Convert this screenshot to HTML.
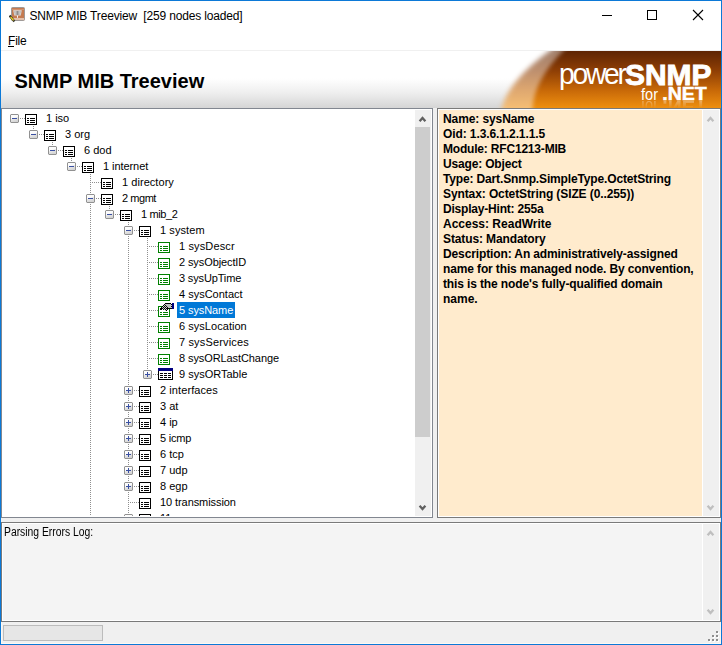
<!DOCTYPE html>
<html><head><meta charset="utf-8"><title>SNMP MIB Treeview</title>
<style>
html,body{margin:0;padding:0}
body{width:722px;height:645px;position:relative;overflow:hidden;background:#f0f0f0;font-family:"Liberation Sans",Arial,sans-serif;font-size:11px;color:#000}
.abs,body>div,body>svg,body>span{position:absolute}
#infotext div{position:static;height:15px}
#frame{left:0;top:0;width:720px;height:643px;border:1px solid #0c79d7;pointer-events:none}
#titlebar{left:1px;top:1px;width:720px;height:30px;background:#fff}
#title{left:29.4px;top:9px;font-size:12px;line-height:15px;white-space:pre;letter-spacing:-.17px}
#menubar{left:1px;top:31px;width:720px;height:19px;background:#fff}
#file{left:8px;top:34px;font-size:12px;line-height:15px;letter-spacing:-.2px}
#file u{text-decoration:none}
#fileul{left:8px;top:46px;width:6px;height:1px;background:#000}
#sep{left:1px;top:50px;width:720px;height:1px;background:#f0f0f0}
#header{left:1px;top:51px;width:720px;height:57px;background:linear-gradient(#fff 0,#fff 48%,#eee 74%,#d5d5d5 100%)}
#htitle{left:14.5px;top:69px;font-size:20px;font-weight:bold;line-height:24px;white-space:nowrap}
#logo{left:440px;top:51px}
#tree{left:1px;top:108px;width:430px;height:408px;border:1px solid #828790;background:#fff;overflow:hidden}
#treeclip{left:3px;top:110px;width:412px;height:406px;overflow:hidden}
#treeclip svg{position:absolute;left:-3px;top:-110px}
.lbl{position:absolute;margin-left:-3px;margin-top:-110px;height:16px;line-height:16px;padding:0 2px 0 2px;white-space:nowrap;font-size:11px}
.sel{background:#0078d7;color:#fff}
#tsb{left:415px;top:110px;width:16px;height:406px;background:#f0f0f0}
#tthumb{left:415px;top:127px;width:15px;height:310px;background:#cdcdcd}
#info{left:437px;top:108px;width:282px;height:408px;border:1px solid #7a7a7a;background:#ffebcd;box-shadow:inset 0 0 0 1px #fff;border-right-color:#7a7a7a}
#infotext{left:443px;top:112px;width:258px;font-size:12px;font-weight:bold;line-height:15px;letter-spacing:-.1px;white-space:nowrap}
#isb{left:702px;top:110px;width:17px;height:406px;background:#f0f0f0;border-left:1px solid #fff;box-sizing:border-box}
#log{left:1px;top:522px;width:718px;height:98px;border:1px solid #7a7a7a;border-right-color:#7a7a7a;background:#f4f4f4;box-shadow:inset 0 0 0 1px #fff}
#logtext{left:4px;top:525px;font-size:12px;line-height:14px;white-space:nowrap;transform:scaleX(.862);transform-origin:0 0}
#lsb{left:702px;top:524px;width:17px;height:96px;background:#f0f0f0;border-left:1px solid #fff;box-sizing:border-box}
#status{left:1px;top:622px;width:720px;height:22px;background:#f0f0f0;box-shadow:inset 1px 0 #fdf8f3,inset -1px 0 #fdf8f3,inset 0 -1px #fdf8f3}
#prog{left:3px;top:625px;width:98px;height:14px;border:1px solid #bcbcbc;background:#e6e6e6}
</style></head><body>
<div id="titlebar"></div>
<svg id="appicon" style="left:9px;top:6px" width="17" height="17" viewBox="0 0 17 17">
<rect x="2.5" y="1.5" width="13" height="13" rx="1" fill="#c47b51" stroke="#9f9a98"/>
<path d="M4.2 4.2H12.8L11.8 9.6H5.2Z" fill="#dedcdb"/>
<path d="M5 5.5H12V6.5H5ZM5.5 7.5H11.5V8.5H5.5Z" fill="#a9a5a3"/>
<rect x="7.6" y="5" width="1.8" height="4" fill="#8f8b89"/>
<rect x="8" y="9.5" width="1" height="2.3" fill="#fbf6f2"/>
<rect x="3" y="12" width="12" height="2" fill="#e4c0aa"/>
<rect x="3" y="3" width="12" height=".8" fill="#d69a78"/>
<path d="M.6 9.6L5.4 15.4" stroke="#3a392e" stroke-width="2.3"/>
<path d="M1.6 10.8L4.5 14.3" stroke="#f4dc18" stroke-width="1.3"/>
</svg>
<span id="title">SNMP MIB Treeview  [259 nodes loaded]</span>
<svg id="ctl" style="left:590px;top:1px" width="131" height="30" viewBox="590 1 131 30" shape-rendering="crispEdges">
<rect x="602" y="15" width="10" height="1" fill="#000"/>
<rect x="647.5" y="10.5" width="9" height="9" fill="none" stroke="#000"/>
<path d="M693 10L703 20M703 10L693 20" stroke="#000" stroke-width="1.1" shape-rendering="auto"/>
</svg>
<div id="menubar"></div>
<span id="file"><u>F</u>ile</span><div id="fileul"></div>
<div id="sep"></div>
<div id="header"></div>
<span id="htitle">SNMP MIB Treeview</span>
<svg id="logo" width="281" height="57" viewBox="440 51 281 57">
<defs>
<linearGradient id="lg" x1="0" y1="0" x2="0" y2="1"><stop offset="0" stop-color="#5e2403"/><stop offset=".35" stop-color="#8f3f05"/><stop offset=".7" stop-color="#c96a08"/><stop offset="1" stop-color="#ee8f10"/></linearGradient>
<linearGradient id="rf" gradientUnits="userSpaceOnUse" x1="0" y1="100" x2="0" y2="108"><stop offset="0" stop-color="#fff" stop-opacity=".4"/><stop offset="1" stop-color="#fff" stop-opacity="0"/></linearGradient>
<filter id="b2" x="-20%" y="-20%" width="140%" height="140%"><feGaussianBlur stdDeviation="2.5"/></filter>
<filter id="b3" x="-20%" y="-20%" width="140%" height="140%"><feGaussianBlur stdDeviation="2.2"/></filter>
<mask id="mk" maskUnits="userSpaceOnUse" x="440" y="51" width="281" height="57"><path d="M558 45L549.5 51Q510.25 79 502 107L501.5 114H730V45Z" fill="#fff" filter="url(#b2)"/><rect x="610" y="40" width="120" height="80" fill="#fff"/></mask>
<mask id="band" maskUnits="userSpaceOnUse" x="440" y="51" width="281" height="57"><rect x="440" y="51" width="281" height="57" fill="#fff"/><path d="M570 45L563 51Q535.25 79 532.5 107L532 114H730V45Z" fill="#000" filter="url(#b3)"/><rect x="610" y="40" width="120" height="80" fill="#000"/></mask>
<mask id="rfm" maskUnits="userSpaceOnUse" x="440" y="51" width="281" height="57"><rect x="440" y="100" width="281" height="8" fill="url(#rf)"/></mask>
</defs>
<g mask="url(#mk)">
<rect x="440" y="51" width="281" height="57" fill="url(#lg)"/>
<rect x="440" y="51" width="281" height="57" fill="#fff" opacity=".42" mask="url(#band)"/>
</g>
<g font-family="Liberation Sans, Arial, sans-serif" fill="#fff">
<text transform="translate(559 84.3) scale(.975 1)" font-size="29" letter-spacing="-2.3">power</text>
<text x="625" y="84.8" font-size="29" font-weight="bold" textLength="86.5" lengthAdjust="spacingAndGlyphs" stroke="#fff" stroke-width=".9">SNMP</text>
<text x="641" y="99.9" font-size="17" textLength="17" lengthAdjust="spacingAndGlyphs">for</text>
<text x="662.3" y="99.9" font-size="17.5" font-weight="bold" textLength="44.5" lengthAdjust="spacingAndGlyphs" stroke="#fff" stroke-width=".5">.NET</text>
<g mask="url(#rfm)"><g transform="translate(0 200.6) scale(1 -1)">
<text x="641" y="99.9" font-size="17" textLength="17" lengthAdjust="spacingAndGlyphs">for</text>
<text x="662.3" y="99.9" font-size="17.5" font-weight="bold" textLength="44.5" lengthAdjust="spacingAndGlyphs">.NET</text>
</g></g>
</g>
</svg>
<div id="tree"></div>
<div id="treeclip">
<svg width="430" height="420" viewBox="0 0 430 420" style="left:-3px;top:-110px;overflow:visible" shape-rendering="crispEdges">
<defs><linearGradient id="bx" x1="0" y1="0" x2=".35" y2="1"><stop offset="0" stop-color="#fff"/><stop offset=".5" stop-color="#fafafa"/><stop offset=".62" stop-color="#e6e6e6"/><stop offset="1" stop-color="#d2d2d2"/></linearGradient></defs>
<path d="M33.5 125V130" stroke="#8f8f8f" stroke-dasharray="1 1" stroke-dashoffset="1"/><path d="M52.5 141V146" stroke="#8f8f8f" stroke-dasharray="1 1" stroke-dashoffset="1"/><path d="M71.5 157V162" stroke="#8f8f8f" stroke-dasharray="1 1" stroke-dashoffset="1"/><path d="M90.5 173V521" stroke="#8f8f8f" stroke-dasharray="1 1" stroke-dashoffset="1"/><path d="M109.5 205V210" stroke="#8f8f8f" stroke-dasharray="1 1" stroke-dashoffset="1"/><path d="M128.5 221V521" stroke="#8f8f8f" stroke-dasharray="1 1" stroke-dashoffset="1"/><path d="M147.5 237V370" stroke="#8f8f8f" stroke-dasharray="1 1" stroke-dashoffset="1"/><path d="M20 118.5H25" stroke="#8f8f8f" stroke-dasharray="1 1"/><rect x="10" y="114" width="9" height="9" fill="url(#bx)"/><rect x="10.5" y="114.5" width="8" height="8" fill="none" stroke="#919191"/><rect x="10" y="114" width="1" height="1" fill="#d4d4d4"/><rect x="18" y="114" width="1" height="1" fill="#d4d4d4"/><rect x="10" y="122" width="1" height="1" fill="#d4d4d4"/><rect x="18" y="122" width="1" height="1" fill="#d4d4d4"/><rect x="12" y="118" width="5" height="1" fill="#3a50a2"/><rect x="25.5" y="114.5" width="11" height="10" fill="#fff" stroke="#000"/><rect x="27" y="118" width="2" height="1" fill="#000"/><rect x="30" y="118" width="5" height="1" fill="#000"/><rect x="27" y="120" width="2" height="1" fill="#000"/><rect x="30" y="120" width="5" height="1" fill="#000"/><rect x="27" y="122" width="2" height="1" fill="#000"/><rect x="30" y="122" width="5" height="1" fill="#000"/><path d="M39 134.5H44" stroke="#8f8f8f" stroke-dasharray="1 1"/><rect x="29" y="130" width="9" height="9" fill="url(#bx)"/><rect x="29.5" y="130.5" width="8" height="8" fill="none" stroke="#919191"/><rect x="29" y="130" width="1" height="1" fill="#d4d4d4"/><rect x="37" y="130" width="1" height="1" fill="#d4d4d4"/><rect x="29" y="138" width="1" height="1" fill="#d4d4d4"/><rect x="37" y="138" width="1" height="1" fill="#d4d4d4"/><rect x="31" y="134" width="5" height="1" fill="#3a50a2"/><rect x="44.5" y="130.5" width="11" height="10" fill="#fff" stroke="#000"/><rect x="46" y="134" width="2" height="1" fill="#000"/><rect x="49" y="134" width="5" height="1" fill="#000"/><rect x="46" y="136" width="2" height="1" fill="#000"/><rect x="49" y="136" width="5" height="1" fill="#000"/><rect x="46" y="138" width="2" height="1" fill="#000"/><rect x="49" y="138" width="5" height="1" fill="#000"/><path d="M58 150.5H63" stroke="#8f8f8f" stroke-dasharray="1 1"/><rect x="48" y="146" width="9" height="9" fill="url(#bx)"/><rect x="48.5" y="146.5" width="8" height="8" fill="none" stroke="#919191"/><rect x="48" y="146" width="1" height="1" fill="#d4d4d4"/><rect x="56" y="146" width="1" height="1" fill="#d4d4d4"/><rect x="48" y="154" width="1" height="1" fill="#d4d4d4"/><rect x="56" y="154" width="1" height="1" fill="#d4d4d4"/><rect x="50" y="150" width="5" height="1" fill="#3a50a2"/><rect x="63.5" y="146.5" width="11" height="10" fill="#fff" stroke="#000"/><rect x="65" y="150" width="2" height="1" fill="#000"/><rect x="68" y="150" width="5" height="1" fill="#000"/><rect x="65" y="152" width="2" height="1" fill="#000"/><rect x="68" y="152" width="5" height="1" fill="#000"/><rect x="65" y="154" width="2" height="1" fill="#000"/><rect x="68" y="154" width="5" height="1" fill="#000"/><path d="M77 166.5H82" stroke="#8f8f8f" stroke-dasharray="1 1"/><rect x="67" y="162" width="9" height="9" fill="url(#bx)"/><rect x="67.5" y="162.5" width="8" height="8" fill="none" stroke="#919191"/><rect x="67" y="162" width="1" height="1" fill="#d4d4d4"/><rect x="75" y="162" width="1" height="1" fill="#d4d4d4"/><rect x="67" y="170" width="1" height="1" fill="#d4d4d4"/><rect x="75" y="170" width="1" height="1" fill="#d4d4d4"/><rect x="69" y="166" width="5" height="1" fill="#3a50a2"/><rect x="82.5" y="162.5" width="11" height="10" fill="#fff" stroke="#000"/><rect x="84" y="166" width="2" height="1" fill="#000"/><rect x="87" y="166" width="5" height="1" fill="#000"/><rect x="84" y="168" width="2" height="1" fill="#000"/><rect x="87" y="168" width="5" height="1" fill="#000"/><rect x="84" y="170" width="2" height="1" fill="#000"/><rect x="87" y="170" width="5" height="1" fill="#000"/><path d="M90 182.5H101" stroke="#8f8f8f" stroke-dasharray="1 1"/><rect x="101.5" y="178.5" width="11" height="10" fill="#fff" stroke="#000"/><rect x="103" y="182" width="2" height="1" fill="#000"/><rect x="106" y="182" width="5" height="1" fill="#000"/><rect x="103" y="184" width="2" height="1" fill="#000"/><rect x="106" y="184" width="5" height="1" fill="#000"/><rect x="103" y="186" width="2" height="1" fill="#000"/><rect x="106" y="186" width="5" height="1" fill="#000"/><path d="M96 198.5H101" stroke="#8f8f8f" stroke-dasharray="1 1"/><rect x="86" y="194" width="9" height="9" fill="url(#bx)"/><rect x="86.5" y="194.5" width="8" height="8" fill="none" stroke="#919191"/><rect x="86" y="194" width="1" height="1" fill="#d4d4d4"/><rect x="94" y="194" width="1" height="1" fill="#d4d4d4"/><rect x="86" y="202" width="1" height="1" fill="#d4d4d4"/><rect x="94" y="202" width="1" height="1" fill="#d4d4d4"/><rect x="88" y="198" width="5" height="1" fill="#3a50a2"/><rect x="101.5" y="194.5" width="11" height="10" fill="#fff" stroke="#000"/><rect x="103" y="198" width="2" height="1" fill="#000"/><rect x="106" y="198" width="5" height="1" fill="#000"/><rect x="103" y="200" width="2" height="1" fill="#000"/><rect x="106" y="200" width="5" height="1" fill="#000"/><rect x="103" y="202" width="2" height="1" fill="#000"/><rect x="106" y="202" width="5" height="1" fill="#000"/><path d="M115 214.5H120" stroke="#8f8f8f" stroke-dasharray="1 1"/><rect x="105" y="210" width="9" height="9" fill="url(#bx)"/><rect x="105.5" y="210.5" width="8" height="8" fill="none" stroke="#919191"/><rect x="105" y="210" width="1" height="1" fill="#d4d4d4"/><rect x="113" y="210" width="1" height="1" fill="#d4d4d4"/><rect x="105" y="218" width="1" height="1" fill="#d4d4d4"/><rect x="113" y="218" width="1" height="1" fill="#d4d4d4"/><rect x="107" y="214" width="5" height="1" fill="#3a50a2"/><rect x="120.5" y="210.5" width="11" height="10" fill="#fff" stroke="#000"/><rect x="122" y="214" width="2" height="1" fill="#000"/><rect x="125" y="214" width="5" height="1" fill="#000"/><rect x="122" y="216" width="2" height="1" fill="#000"/><rect x="125" y="216" width="5" height="1" fill="#000"/><rect x="122" y="218" width="2" height="1" fill="#000"/><rect x="125" y="218" width="5" height="1" fill="#000"/><path d="M134 230.5H139" stroke="#8f8f8f" stroke-dasharray="1 1"/><rect x="124" y="226" width="9" height="9" fill="url(#bx)"/><rect x="124.5" y="226.5" width="8" height="8" fill="none" stroke="#919191"/><rect x="124" y="226" width="1" height="1" fill="#d4d4d4"/><rect x="132" y="226" width="1" height="1" fill="#d4d4d4"/><rect x="124" y="234" width="1" height="1" fill="#d4d4d4"/><rect x="132" y="234" width="1" height="1" fill="#d4d4d4"/><rect x="126" y="230" width="5" height="1" fill="#3a50a2"/><rect x="139.5" y="226.5" width="11" height="10" fill="#fff" stroke="#000"/><rect x="141" y="230" width="2" height="1" fill="#000"/><rect x="144" y="230" width="5" height="1" fill="#000"/><rect x="141" y="232" width="2" height="1" fill="#000"/><rect x="144" y="232" width="5" height="1" fill="#000"/><rect x="141" y="234" width="2" height="1" fill="#000"/><rect x="144" y="234" width="5" height="1" fill="#000"/><path d="M147 246.5H158" stroke="#8f8f8f" stroke-dasharray="1 1"/><rect x="158.5" y="242.5" width="11" height="10" fill="#fff" stroke="#008000"/><rect x="160" y="246" width="2" height="1" fill="#008000"/><rect x="163" y="246" width="5" height="1" fill="#008000"/><rect x="160" y="248" width="2" height="1" fill="#008000"/><rect x="163" y="248" width="5" height="1" fill="#008000"/><rect x="160" y="250" width="2" height="1" fill="#008000"/><rect x="163" y="250" width="5" height="1" fill="#008000"/><path d="M147 262.5H158" stroke="#8f8f8f" stroke-dasharray="1 1"/><rect x="158.5" y="258.5" width="11" height="10" fill="#fff" stroke="#008000"/><rect x="160" y="262" width="2" height="1" fill="#008000"/><rect x="163" y="262" width="5" height="1" fill="#008000"/><rect x="160" y="264" width="2" height="1" fill="#008000"/><rect x="163" y="264" width="5" height="1" fill="#008000"/><rect x="160" y="266" width="2" height="1" fill="#008000"/><rect x="163" y="266" width="5" height="1" fill="#008000"/><path d="M147 278.5H158" stroke="#8f8f8f" stroke-dasharray="1 1"/><rect x="158.5" y="274.5" width="11" height="10" fill="#fff" stroke="#008000"/><rect x="160" y="278" width="2" height="1" fill="#008000"/><rect x="163" y="278" width="5" height="1" fill="#008000"/><rect x="160" y="280" width="2" height="1" fill="#008000"/><rect x="163" y="280" width="5" height="1" fill="#008000"/><rect x="160" y="282" width="2" height="1" fill="#008000"/><rect x="163" y="282" width="5" height="1" fill="#008000"/><path d="M147 294.5H158" stroke="#8f8f8f" stroke-dasharray="1 1"/><rect x="158.5" y="290.5" width="11" height="10" fill="#fff" stroke="#008000"/><rect x="160" y="294" width="2" height="1" fill="#008000"/><rect x="163" y="294" width="5" height="1" fill="#008000"/><rect x="160" y="296" width="2" height="1" fill="#008000"/><rect x="163" y="296" width="5" height="1" fill="#008000"/><rect x="160" y="298" width="2" height="1" fill="#008000"/><rect x="163" y="298" width="5" height="1" fill="#008000"/><path d="M147 310.5H158" stroke="#8f8f8f" stroke-dasharray="1 1"/><rect x="158.5" y="306.5" width="11" height="10" fill="#fff" stroke="#008000"/><rect x="160" y="312" width="2" height="1" fill="#008000"/><rect x="163" y="312" width="5" height="1" fill="#008000"/><rect x="160" y="314" width="2" height="1" fill="#008000"/><rect x="163" y="314" width="5" height="1" fill="#008000"/><rect x="165" y="303" width="1" height="1" fill="#000"/><rect x="166" y="303" width="1" height="1" fill="#000"/><rect x="167" y="303" width="1" height="1" fill="#000"/><rect x="168" y="303" width="1" height="1" fill="#000"/><rect x="169" y="303" width="1" height="1" fill="#000"/><rect x="170" y="303" width="1" height="1" fill="#000"/><rect x="172" y="303" width="1" height="1" fill="#000080"/><rect x="173" y="303" width="1" height="1" fill="#000080"/><rect x="164" y="304" width="1" height="1" fill="#000"/><rect x="165" y="304" width="1" height="1" fill="#c0c0c0"/><rect x="166" y="304" width="1" height="1" fill="#c0c0c0"/><rect x="167" y="304" width="1" height="1" fill="#c0c0c0"/><rect x="168" y="304" width="1" height="1" fill="#c0c0c0"/><rect x="169" y="304" width="1" height="1" fill="#c0c0c0"/><rect x="170" y="304" width="1" height="1" fill="#c0c0c0"/><rect x="171" y="304" width="1" height="1" fill="#000"/><rect x="172" y="304" width="1" height="1" fill="#000080"/><rect x="173" y="304" width="1" height="1" fill="#000080"/><rect x="163" y="305" width="1" height="1" fill="#000"/><rect x="164" y="305" width="1" height="1" fill="#d0d0d0"/><rect x="165" y="305" width="1" height="1" fill="#000"/><rect x="166" y="305" width="1" height="1" fill="#c0c0c0"/><rect x="167" y="305" width="1" height="1" fill="#c0c0c0"/><rect x="168" y="305" width="1" height="1" fill="#c0c0c0"/><rect x="169" y="305" width="1" height="1" fill="#c0c0c0"/><rect x="170" y="305" width="1" height="1" fill="#c0c0c0"/><rect x="171" y="305" width="1" height="1" fill="#c0c0c0"/><rect x="172" y="305" width="1" height="1" fill="#000080"/><rect x="173" y="305" width="1" height="1" fill="#000080"/><rect x="162" y="306" width="1" height="1" fill="#000"/><rect x="163" y="306" width="1" height="1" fill="#d0d0d0"/><rect x="164" y="306" width="1" height="1" fill="#000"/><rect x="165" y="306" width="1" height="1" fill="#d0d0d0"/><rect x="166" y="306" width="1" height="1" fill="#000"/><rect x="167" y="306" width="1" height="1" fill="#c0c0c0"/><rect x="168" y="306" width="1" height="1" fill="#c0c0c0"/><rect x="169" y="306" width="1" height="1" fill="#c0c0c0"/><rect x="170" y="306" width="1" height="1" fill="#c0c0c0"/><rect x="171" y="306" width="1" height="1" fill="#000"/><rect x="172" y="306" width="1" height="1" fill="#000080"/><rect x="173" y="306" width="1" height="1" fill="#000080"/><rect x="161" y="307" width="1" height="1" fill="#000"/><rect x="162" y="307" width="1" height="1" fill="#d0d0d0"/><rect x="163" y="307" width="1" height="1" fill="#000"/><rect x="164" y="307" width="1" height="1" fill="#d0d0d0"/><rect x="165" y="307" width="1" height="1" fill="#000"/><rect x="166" y="307" width="1" height="1" fill="#d0d0d0"/><rect x="167" y="307" width="1" height="1" fill="#000"/><rect x="168" y="307" width="1" height="1" fill="#c0c0c0"/><rect x="169" y="307" width="1" height="1" fill="#c0c0c0"/><rect x="170" y="307" width="1" height="1" fill="#c0c0c0"/><rect x="171" y="307" width="1" height="1" fill="#c0c0c0"/><rect x="172" y="307" width="1" height="1" fill="#000080"/><rect x="173" y="307" width="1" height="1" fill="#000080"/><rect x="160" y="308" width="1" height="1" fill="#000"/><rect x="161" y="308" width="1" height="1" fill="#000"/><rect x="162" y="308" width="1" height="1" fill="#000"/><rect x="163" y="308" width="1" height="1" fill="#d0d0d0"/><rect x="164" y="308" width="1" height="1" fill="#000"/><rect x="165" y="308" width="1" height="1" fill="#d0d0d0"/><rect x="166" y="308" width="1" height="1" fill="#000"/><rect x="167" y="308" width="1" height="1" fill="#000"/><rect x="168" y="308" width="1" height="1" fill="#000"/><rect x="169" y="308" width="1" height="1" fill="#000"/><rect x="170" y="308" width="1" height="1" fill="#000"/><rect x="171" y="308" width="1" height="1" fill="#000"/><rect x="172" y="308" width="1" height="1" fill="#000080"/><rect x="173" y="308" width="1" height="1" fill="#000080"/><rect x="160" y="309" width="1" height="1" fill="#000"/><rect x="161" y="309" width="1" height="1" fill="#000"/><rect x="163" y="309" width="1" height="1" fill="#000"/><rect x="164" y="309" width="1" height="1" fill="#d0d0d0"/><rect x="165" y="309" width="1" height="1" fill="#000"/><rect x="166" y="309" width="1" height="1" fill="#d0d0d0"/><rect x="167" y="309" width="1" height="1" fill="#000"/><rect x="165" y="310" width="1" height="1" fill="#d0d0d0"/><rect x="166" y="310" width="1" height="1" fill="#000"/><path d="M147 326.5H158" stroke="#8f8f8f" stroke-dasharray="1 1"/><rect x="158.5" y="322.5" width="11" height="10" fill="#fff" stroke="#008000"/><rect x="160" y="326" width="2" height="1" fill="#008000"/><rect x="163" y="326" width="5" height="1" fill="#008000"/><rect x="160" y="328" width="2" height="1" fill="#008000"/><rect x="163" y="328" width="5" height="1" fill="#008000"/><rect x="160" y="330" width="2" height="1" fill="#008000"/><rect x="163" y="330" width="5" height="1" fill="#008000"/><path d="M147 342.5H158" stroke="#8f8f8f" stroke-dasharray="1 1"/><rect x="158.5" y="338.5" width="11" height="10" fill="#fff" stroke="#008000"/><rect x="160" y="342" width="2" height="1" fill="#008000"/><rect x="163" y="342" width="5" height="1" fill="#008000"/><rect x="160" y="344" width="2" height="1" fill="#008000"/><rect x="163" y="344" width="5" height="1" fill="#008000"/><rect x="160" y="346" width="2" height="1" fill="#008000"/><rect x="163" y="346" width="5" height="1" fill="#008000"/><path d="M147 358.5H158" stroke="#8f8f8f" stroke-dasharray="1 1"/><rect x="158.5" y="354.5" width="11" height="10" fill="#fff" stroke="#008000"/><rect x="160" y="358" width="2" height="1" fill="#008000"/><rect x="163" y="358" width="5" height="1" fill="#008000"/><rect x="160" y="360" width="2" height="1" fill="#008000"/><rect x="163" y="360" width="5" height="1" fill="#008000"/><rect x="160" y="362" width="2" height="1" fill="#008000"/><rect x="163" y="362" width="5" height="1" fill="#008000"/><path d="M153 374.5H158" stroke="#8f8f8f" stroke-dasharray="1 1"/><rect x="143" y="370" width="9" height="9" fill="url(#bx)"/><rect x="143.5" y="370.5" width="8" height="8" fill="none" stroke="#919191"/><rect x="143" y="370" width="1" height="1" fill="#d4d4d4"/><rect x="151" y="370" width="1" height="1" fill="#d4d4d4"/><rect x="143" y="378" width="1" height="1" fill="#d4d4d4"/><rect x="151" y="378" width="1" height="1" fill="#d4d4d4"/><rect x="145" y="374" width="5" height="1" fill="#3a50a2"/><rect x="147" y="372" width="1" height="5" fill="#3a50a2"/><rect x="158.5" y="368.5" width="14" height="11" fill="#fff" stroke="#000"/><rect x="158" y="368" width="15" height="3" fill="#000080"/><rect x="160" y="373" width="3" height="1" fill="#000"/><rect x="164" y="373" width="3" height="1" fill="#000"/><rect x="168" y="373" width="3" height="1" fill="#000"/><rect x="160" y="375" width="3" height="1" fill="#000"/><rect x="164" y="375" width="3" height="1" fill="#000"/><rect x="168" y="375" width="3" height="1" fill="#000"/><rect x="160" y="377" width="3" height="1" fill="#000"/><rect x="164" y="377" width="3" height="1" fill="#000"/><rect x="168" y="377" width="3" height="1" fill="#000"/><path d="M134 390.5H139" stroke="#8f8f8f" stroke-dasharray="1 1"/><rect x="124" y="386" width="9" height="9" fill="url(#bx)"/><rect x="124.5" y="386.5" width="8" height="8" fill="none" stroke="#919191"/><rect x="124" y="386" width="1" height="1" fill="#d4d4d4"/><rect x="132" y="386" width="1" height="1" fill="#d4d4d4"/><rect x="124" y="394" width="1" height="1" fill="#d4d4d4"/><rect x="132" y="394" width="1" height="1" fill="#d4d4d4"/><rect x="126" y="390" width="5" height="1" fill="#3a50a2"/><rect x="128" y="388" width="1" height="5" fill="#3a50a2"/><rect x="139.5" y="386.5" width="11" height="10" fill="#fff" stroke="#000"/><rect x="141" y="390" width="2" height="1" fill="#000"/><rect x="144" y="390" width="5" height="1" fill="#000"/><rect x="141" y="392" width="2" height="1" fill="#000"/><rect x="144" y="392" width="5" height="1" fill="#000"/><rect x="141" y="394" width="2" height="1" fill="#000"/><rect x="144" y="394" width="5" height="1" fill="#000"/><path d="M134 406.5H139" stroke="#8f8f8f" stroke-dasharray="1 1"/><rect x="124" y="402" width="9" height="9" fill="url(#bx)"/><rect x="124.5" y="402.5" width="8" height="8" fill="none" stroke="#919191"/><rect x="124" y="402" width="1" height="1" fill="#d4d4d4"/><rect x="132" y="402" width="1" height="1" fill="#d4d4d4"/><rect x="124" y="410" width="1" height="1" fill="#d4d4d4"/><rect x="132" y="410" width="1" height="1" fill="#d4d4d4"/><rect x="126" y="406" width="5" height="1" fill="#3a50a2"/><rect x="128" y="404" width="1" height="5" fill="#3a50a2"/><rect x="139.5" y="402.5" width="11" height="10" fill="#fff" stroke="#000"/><rect x="141" y="406" width="2" height="1" fill="#000"/><rect x="144" y="406" width="5" height="1" fill="#000"/><rect x="141" y="408" width="2" height="1" fill="#000"/><rect x="144" y="408" width="5" height="1" fill="#000"/><rect x="141" y="410" width="2" height="1" fill="#000"/><rect x="144" y="410" width="5" height="1" fill="#000"/><path d="M134 422.5H139" stroke="#8f8f8f" stroke-dasharray="1 1"/><rect x="124" y="418" width="9" height="9" fill="url(#bx)"/><rect x="124.5" y="418.5" width="8" height="8" fill="none" stroke="#919191"/><rect x="124" y="418" width="1" height="1" fill="#d4d4d4"/><rect x="132" y="418" width="1" height="1" fill="#d4d4d4"/><rect x="124" y="426" width="1" height="1" fill="#d4d4d4"/><rect x="132" y="426" width="1" height="1" fill="#d4d4d4"/><rect x="126" y="422" width="5" height="1" fill="#3a50a2"/><rect x="128" y="420" width="1" height="5" fill="#3a50a2"/><rect x="139.5" y="418.5" width="11" height="10" fill="#fff" stroke="#000"/><rect x="141" y="422" width="2" height="1" fill="#000"/><rect x="144" y="422" width="5" height="1" fill="#000"/><rect x="141" y="424" width="2" height="1" fill="#000"/><rect x="144" y="424" width="5" height="1" fill="#000"/><rect x="141" y="426" width="2" height="1" fill="#000"/><rect x="144" y="426" width="5" height="1" fill="#000"/><path d="M134 438.5H139" stroke="#8f8f8f" stroke-dasharray="1 1"/><rect x="124" y="434" width="9" height="9" fill="url(#bx)"/><rect x="124.5" y="434.5" width="8" height="8" fill="none" stroke="#919191"/><rect x="124" y="434" width="1" height="1" fill="#d4d4d4"/><rect x="132" y="434" width="1" height="1" fill="#d4d4d4"/><rect x="124" y="442" width="1" height="1" fill="#d4d4d4"/><rect x="132" y="442" width="1" height="1" fill="#d4d4d4"/><rect x="126" y="438" width="5" height="1" fill="#3a50a2"/><rect x="128" y="436" width="1" height="5" fill="#3a50a2"/><rect x="139.5" y="434.5" width="11" height="10" fill="#fff" stroke="#000"/><rect x="141" y="438" width="2" height="1" fill="#000"/><rect x="144" y="438" width="5" height="1" fill="#000"/><rect x="141" y="440" width="2" height="1" fill="#000"/><rect x="144" y="440" width="5" height="1" fill="#000"/><rect x="141" y="442" width="2" height="1" fill="#000"/><rect x="144" y="442" width="5" height="1" fill="#000"/><path d="M134 454.5H139" stroke="#8f8f8f" stroke-dasharray="1 1"/><rect x="124" y="450" width="9" height="9" fill="url(#bx)"/><rect x="124.5" y="450.5" width="8" height="8" fill="none" stroke="#919191"/><rect x="124" y="450" width="1" height="1" fill="#d4d4d4"/><rect x="132" y="450" width="1" height="1" fill="#d4d4d4"/><rect x="124" y="458" width="1" height="1" fill="#d4d4d4"/><rect x="132" y="458" width="1" height="1" fill="#d4d4d4"/><rect x="126" y="454" width="5" height="1" fill="#3a50a2"/><rect x="128" y="452" width="1" height="5" fill="#3a50a2"/><rect x="139.5" y="450.5" width="11" height="10" fill="#fff" stroke="#000"/><rect x="141" y="454" width="2" height="1" fill="#000"/><rect x="144" y="454" width="5" height="1" fill="#000"/><rect x="141" y="456" width="2" height="1" fill="#000"/><rect x="144" y="456" width="5" height="1" fill="#000"/><rect x="141" y="458" width="2" height="1" fill="#000"/><rect x="144" y="458" width="5" height="1" fill="#000"/><path d="M134 470.5H139" stroke="#8f8f8f" stroke-dasharray="1 1"/><rect x="124" y="466" width="9" height="9" fill="url(#bx)"/><rect x="124.5" y="466.5" width="8" height="8" fill="none" stroke="#919191"/><rect x="124" y="466" width="1" height="1" fill="#d4d4d4"/><rect x="132" y="466" width="1" height="1" fill="#d4d4d4"/><rect x="124" y="474" width="1" height="1" fill="#d4d4d4"/><rect x="132" y="474" width="1" height="1" fill="#d4d4d4"/><rect x="126" y="470" width="5" height="1" fill="#3a50a2"/><rect x="128" y="468" width="1" height="5" fill="#3a50a2"/><rect x="139.5" y="466.5" width="11" height="10" fill="#fff" stroke="#000"/><rect x="141" y="470" width="2" height="1" fill="#000"/><rect x="144" y="470" width="5" height="1" fill="#000"/><rect x="141" y="472" width="2" height="1" fill="#000"/><rect x="144" y="472" width="5" height="1" fill="#000"/><rect x="141" y="474" width="2" height="1" fill="#000"/><rect x="144" y="474" width="5" height="1" fill="#000"/><path d="M134 486.5H139" stroke="#8f8f8f" stroke-dasharray="1 1"/><rect x="124" y="482" width="9" height="9" fill="url(#bx)"/><rect x="124.5" y="482.5" width="8" height="8" fill="none" stroke="#919191"/><rect x="124" y="482" width="1" height="1" fill="#d4d4d4"/><rect x="132" y="482" width="1" height="1" fill="#d4d4d4"/><rect x="124" y="490" width="1" height="1" fill="#d4d4d4"/><rect x="132" y="490" width="1" height="1" fill="#d4d4d4"/><rect x="126" y="486" width="5" height="1" fill="#3a50a2"/><rect x="128" y="484" width="1" height="5" fill="#3a50a2"/><rect x="139.5" y="482.5" width="11" height="10" fill="#fff" stroke="#000"/><rect x="141" y="486" width="2" height="1" fill="#000"/><rect x="144" y="486" width="5" height="1" fill="#000"/><rect x="141" y="488" width="2" height="1" fill="#000"/><rect x="144" y="488" width="5" height="1" fill="#000"/><rect x="141" y="490" width="2" height="1" fill="#000"/><rect x="144" y="490" width="5" height="1" fill="#000"/><path d="M128 502.5H139" stroke="#8f8f8f" stroke-dasharray="1 1"/><rect x="139.5" y="498.5" width="11" height="10" fill="#fff" stroke="#000"/><rect x="141" y="502" width="2" height="1" fill="#000"/><rect x="144" y="502" width="5" height="1" fill="#000"/><rect x="141" y="504" width="2" height="1" fill="#000"/><rect x="144" y="504" width="5" height="1" fill="#000"/><rect x="141" y="506" width="2" height="1" fill="#000"/><rect x="144" y="506" width="5" height="1" fill="#000"/><path d="M134 518.5H139" stroke="#8f8f8f" stroke-dasharray="1 1"/><rect x="124" y="514" width="9" height="9" fill="url(#bx)"/><rect x="124.5" y="514.5" width="8" height="8" fill="none" stroke="#919191"/><rect x="124" y="514" width="1" height="1" fill="#d4d4d4"/><rect x="132" y="514" width="1" height="1" fill="#d4d4d4"/><rect x="124" y="522" width="1" height="1" fill="#d4d4d4"/><rect x="132" y="522" width="1" height="1" fill="#d4d4d4"/><rect x="126" y="518" width="5" height="1" fill="#3a50a2"/><rect x="128" y="516" width="1" height="5" fill="#3a50a2"/><rect x="139.5" y="514.5" width="11" height="10" fill="#fff" stroke="#000"/><rect x="141" y="518" width="2" height="1" fill="#000"/><rect x="144" y="518" width="5" height="1" fill="#000"/><rect x="141" y="520" width="2" height="1" fill="#000"/><rect x="144" y="520" width="5" height="1" fill="#000"/><rect x="141" y="522" width="2" height="1" fill="#000"/><rect x="144" y="522" width="5" height="1" fill="#000"/>
</svg>
<span class="lbl" style="left:44px;top:110px">1 iso</span><span class="lbl" style="left:63px;top:126px">3 org</span><span class="lbl" style="left:82px;top:142px">6 dod</span><span class="lbl" style="left:101px;top:158px;letter-spacing:-0.07px">1 internet</span><span class="lbl" style="left:120px;top:174px;letter-spacing:0.05px">1 directory</span><span class="lbl" style="left:120px;top:190px;letter-spacing:-0.45px">2 mgmt</span><span class="lbl" style="left:139px;top:206px;letter-spacing:-0.39px">1 mib_2</span><span class="lbl" style="left:158px;top:222px;letter-spacing:0.09px">1 system</span><span class="lbl" style="left:177px;top:238px;letter-spacing:0.13px">1 sysDescr</span><span class="lbl" style="left:177px;top:254px;letter-spacing:-0.1px">2 sysObjectID</span><span class="lbl" style="left:177px;top:270px;letter-spacing:-0.15px">3 sysUpTime</span><span class="lbl" style="left:177px;top:286px">4 sysContact</span><span class="lbl sel" style="left:177px;top:302px;letter-spacing:-0.09px;width:54px">5 sysName</span><span class="lbl" style="left:177px;top:318px;letter-spacing:0.04px">6 sysLocation</span><span class="lbl" style="left:177px;top:334px;letter-spacing:0.15px">7 sysServices</span><span class="lbl" style="left:177px;top:350px;letter-spacing:-0.09px">8 sysORLastChange</span><span class="lbl" style="left:177px;top:366px">9 sysORTable</span><span class="lbl" style="left:158px;top:382px;letter-spacing:0.08px">2 interfaces</span><span class="lbl" style="left:158px;top:398px">3 at</span><span class="lbl" style="left:158px;top:414px">4 ip</span><span class="lbl" style="left:158px;top:430px;letter-spacing:-0.2px">5 icmp</span><span class="lbl" style="left:158px;top:446px">6 tcp</span><span class="lbl" style="left:158px;top:462px">7 udp</span><span class="lbl" style="left:158px;top:478px">8 egp</span><span class="lbl" style="left:158px;top:494px;letter-spacing:-0.08px">10 transmission</span><span class="lbl" style="left:158px;top:510px">11 snmp</span>
</div>
<div id="tsb"></div><div id="tthumb"></div>
<svg style="left:415px;top:110px" width="16" height="406" viewBox="415 110 16 406"><path d="M419.6 121.3L422.5 118.0L425.4 121.3" fill="none" stroke="#606060" stroke-width="2.3"/><path d="M419.6 505.7L422.5 509.0L425.4 505.7" fill="none" stroke="#606060" stroke-width="2.3"/></svg>
<div id="info"></div>
<div id="infotext"><div style="letter-spacing:-0.1px">Name: sysName</div><div style="letter-spacing:-0.1px">Oid: 1.3.6.1.2.1.1.5</div><div style="letter-spacing:-0.19px">Module: RFC1213-MIB</div><div style="letter-spacing:-0.17px">Usage: Object</div><div style="letter-spacing:-0.15px">Type: Dart.Snmp.SimpleType.OctetString</div><div style="letter-spacing:-0.1px">Syntax: OctetString (SIZE (0..255))</div><div style="letter-spacing:-0.2px">Display-Hint: 255a</div><div style="letter-spacing:0px">Access: ReadWrite</div><div style="letter-spacing:-0.12px">Status: Mandatory</div><div style="letter-spacing:-0.12px">Description: An administratively-assigned</div><div style="letter-spacing:-0.13px">name for this managed node. By convention,</div><div style="letter-spacing:-0.13px">this is the node's fully-qualified domain</div><div style="letter-spacing:0px">name.</div></div>
<div id="isb"></div>
<svg style="left:703px;top:110px" width="16" height="406" viewBox="703 110 16 406"><path d="M707.6 121.3L710.5 118.0L713.4 121.3" fill="none" stroke="#bfbfbf" stroke-width="2.3"/><path d="M707.6 505.7L710.5 509.0L713.4 505.7" fill="none" stroke="#bfbfbf" stroke-width="2.3"/></svg>
<div id="log"></div>
<span id="logtext">Parsing Errors Log:</span>
<div id="lsb"></div>
<svg style="left:703px;top:524px" width="16" height="96" viewBox="703 524 16 96"><path d="M707.6 535.3L710.5 532.0L713.4 535.3" fill="none" stroke="#bfbfbf" stroke-width="2.3"/><path d="M707.6 609.7L710.5 613.0L713.4 609.7" fill="none" stroke="#bfbfbf" stroke-width="2.3"/></svg>
<div id="status"></div><div id="prog"></div>
<svg style="left:706px;top:629px" width="14" height="14" viewBox="706 629 14 14" shape-rendering="crispEdges">
<g fill="#fff"><rect x="717" y="632" width="2" height="2"/><rect x="713" y="636" width="2" height="2"/><rect x="717" y="636" width="2" height="2"/><rect x="709" y="640" width="2" height="2"/><rect x="713" y="640" width="2" height="2"/><rect x="717" y="640" width="2" height="2"/></g>
<g fill="#8e8e8e"><rect x="716" y="631" width="2" height="2"/><rect x="712" y="635" width="2" height="2"/><rect x="716" y="635" width="2" height="2"/><rect x="708" y="639" width="2" height="2"/><rect x="712" y="639" width="2" height="2"/><rect x="716" y="639" width="2" height="2"/></g>
</svg>
<div id="frame"></div>
</body></html>
